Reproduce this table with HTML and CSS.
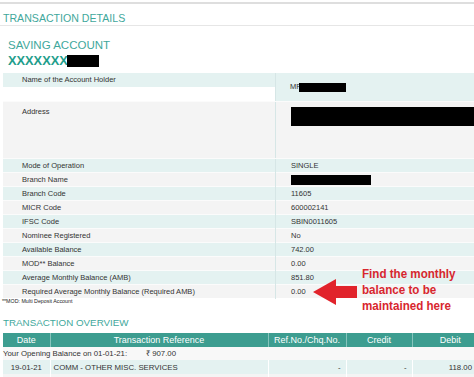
FILE: index.html
```html
<!DOCTYPE html>
<html>
<head>
<meta charset="utf-8">
<link rel="stylesheet" href="styles.css">
</head>
<body>
<div class="page">
  <div class="topline"></div>
  <h2 class="sec-title">TRANSACTION DETAILS</h2>
  <div class="rule"></div>
  <div class="acct">
    <div class="acct-type">SAVING ACCOUNT</div>
    <div class="acct-no">XXXXXXX<span class="redact redact-acct"></span></div>
  </div>

  <div class="details-wrap">
    <div class="details">
      <div class="row row-name">
        <div class="lbl"><div class="strip">Name of the Account Holder</div></div>
        <div class="val teal">MR<span class="redact redact-name"></span></div>
      </div>
      <div class="row row-addr grey">
        <div class="lbl">Address</div>
        <div class="val"><span class="redact redact-addr"></span></div>
      </div>
      <div class="row teal"><div class="lbl">Mode of Operation</div><div class="val">SINGLE</div></div>
      <div class="row grey"><div class="lbl">Branch Name</div><div class="val"><span class="redact redact-branch"></span></div></div>
      <div class="row teal"><div class="lbl">Branch Code</div><div class="val">11605</div></div>
      <div class="row grey"><div class="lbl">MICR Code</div><div class="val">600002141</div></div>
      <div class="row teal"><div class="lbl">IFSC Code</div><div class="val">SBIN0011605</div></div>
      <div class="row grey"><div class="lbl">Nominee Registered</div><div class="val">No</div></div>
      <div class="row teal"><div class="lbl">Available Balance</div><div class="val">742.00</div></div>
      <div class="row grey"><div class="lbl">MOD** Balance</div><div class="val">0.00</div></div>
      <div class="row teal"><div class="lbl">Average Monthly Balance (AMB)</div><div class="val">851.80</div></div>
      <div class="row grey"><div class="lbl">Required Average Monthly Balance (Required AMB)</div><div class="val">0.00</div></div>
    </div>
    <div class="footnote">**MOD: Multi Deposit Account</div>

    <svg class="arrow" width="50" height="30" viewBox="0 0 50 30">
      <polygon points="3,15 26,2 26,9 47,9 47,21 26,21 26,28" fill="#e1232b"/>
    </svg>
    <div class="callout">Find the monthly<br>balance to be<br>maintained here</div>
  </div>

  <h2 class="sec-title ov-title">TRANSACTION OVERVIEW</h2>
  <table class="tx">
    <colgroup>
      <col class="c-date"><col class="c-ref"><col class="c-chq"><col class="c-cr"><col class="c-dr">
    </colgroup>
    <thead>
      <tr><th>Date</th><th>Transaction Reference</th><th>Ref.No./Chq.No.</th><th>Credit</th><th>Debit</th></tr>
    </thead>
    <tbody>
      <tr class="open-row"><td colspan="5"><span class="open-lbl">Your Opening Balance on 01-01-21:</span><span class="open-amt">₹ 907.00</span></td></tr>
      <tr class="tx-row teal"><td class="ctr">19-01-21</td><td>COMM - OTHER MISC. SERVICES</td><td class="num">-</td><td class="num">-</td><td class="num">118.00</td></tr>
      <tr class="tx-row grey"><td></td><td></td><td></td><td></td><td></td></tr>
    </tbody>
  </table>
</div>
</body>
</html>
```

FILE: styles.css
```css
html, body {
  margin: 0;
  padding: 0;
  background: #fff;
  overflow: hidden;
}
.page {
  width: 474px;
  height: 377px;
  overflow: hidden;
  font-family: "Liberation Sans", Arial, sans-serif;
  color: #333;
}
.topline {
  margin-top: 2px;
  height: 2px;
  background: #dedede;
}
.sec-title {
  margin: 8px 0 0 0;
  padding-left: 3px;
  font-size: 10.6px;
  font-weight: normal;
  line-height: 13px;
  color: #3fa89c;
}
.rule {
  height: 1px;
  background: #e6e6e6;
}
.acct {
  padding-left: 8px;
  margin-top: 12px;
}
.acct-type {
  font-size: 11.5px;
  line-height: 14px;
  color: #3fa89c;
}
.acct-no {
  margin-top: 2px;
  font-size: 12.8px;
  font-weight: bold;
  line-height: 14px;
  color: #1f9e8c;
  display: flex;
  align-items: center;
}
.redact {
  display: inline-block;
  background: #000;
}
.redact-acct {
  width: 32px;
  height: 12px;
  margin-left: -1px;
}
.details-wrap {
  position: relative;
  margin-top: 5px;
}
.details {
  margin-left: 3px;
}
.row {
  display: grid;
  grid-template-columns: 272px 1fr;
  height: 14px;
  font-size: 7.5px;
  line-height: 14px;
  box-sizing: border-box;
}
.row.teal { background: #e4f2f1; }
.row.grey { background: #f4f4f4; }
.row + .row { border-top: 1px solid #fbfbfb; }
.lbl {
  padding-left: 19px;
  white-space: nowrap;
}
.val {
  padding-left: 15px;
  border-left: 1px solid #d6e6e6;
  white-space: nowrap;
  display: flex;
  align-items: center;
}
.row-name {
  height: 28px;
  background: #fff;
}
.row-name .lbl { padding-left: 0; }
.row-name .strip {
  background: #e4f2f1;
  padding-left: 19px;
  height: 14px;
  line-height: 14px;
}
.val.teal { background: #e4f2f1; padding-left: 14px; }
.redact-name {
  width: 47px;
  height: 9px;
  margin-left: -3px;
}
.row.row-addr {
  height: 57px;
}
.row-addr .lbl { line-height: 20px; }
.row-addr .val { align-items: flex-start; padding-top: 5px; }
.redact-addr {
  width: 200px;
  height: 19px;
}
.redact-branch {
  width: 80px;
  height: 10px;
}
.footnote {
  padding-left: 2px;
  font-size: 5.3px;
  line-height: 7px;
  color: #222;
  white-space: nowrap;
}
.arrow {
  position: absolute;
  left: 310px;
  top: 204px;
}
.callout {
  position: absolute;
  left: 362px;
  top: 193px;
  font-size: 13.5px;
  line-height: 16px;
  font-weight: bold;
  color: #d8262e;
  white-space: nowrap;
  transform: scaleX(0.86);
  transform-origin: left top;
}
.ov-title {
  margin-top: 11px;
  font-size: 9.8px;
}
.tx {
  margin: 4px 0 0 3px;
  width: 485px;
  table-layout: fixed;
  border-collapse: collapse;
  font-size: 7.8px;
}
.c-date { width: 47px; }
.c-ref { width: 218px; }
.c-chq { width: 78px; }
.c-cr { width: 66px; }
.c-dr { width: 76px; }
.tx th {
  background: #3d9d90;
  color: #fff;
  font-weight: normal;
  font-size: 9px;
  height: 14px;
  padding: 0;
  line-height: 14px;
  border-left: 1px solid #86c4bc;
  text-align: center;
}
.tx th:first-child { border-left: none; }
.tx td {
  height: 14px;
  padding: 0 3px;
  line-height: 13px;
  white-space: nowrap;
  border-left: 1px solid #fff;
}
.tx td:first-child { border-left: none; }
.open-row td {
  background: #f8f8f8;
  padding-left: 0;
  height: 13px;
}
.open-lbl {
  display: inline-block;
  width: 143px;
}
.tx-row.teal td { background: #e4f2f1; }
.tx-row.grey td { background: #f4f4f4; }
.tx td.ctr { text-align: center; }
.tx td.num { text-align: right; padding-right: 5px; }
.tx td.num.last, .tx td:last-child.num { padding-right: 16px; }
```
